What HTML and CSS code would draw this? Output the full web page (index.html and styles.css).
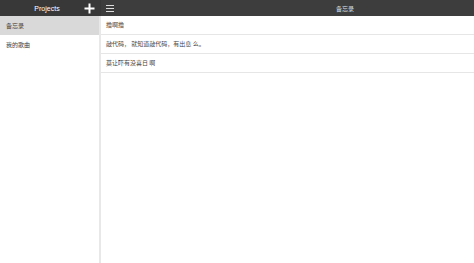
FILE: index.html
```
<!DOCTYPE html>
<html lang="zh">
<head>
    <meta charset="UTF-8">
    <meta name="viewport" content="width=device-width, initial-scale=1.0">
    <title>备忘录</title>
    <link rel="stylesheet" href="styles.css">
</head>
<body>
    <div class="app">
        <div class="sidebar">
            <div class="side-header">
                <span class="side-title">Projects</span>
                <span class="add-btn">
                    <svg width="11" height="11" viewBox="0 0 11 11"><path d="M5.5 0.5v10M0.5 5.5h10" stroke="#fff" stroke-width="2"/></svg>
                </span>
            </div>
            <ul class="project-list">
                <li class="active">备忘录</li>
                <li>我的歌曲</li>
            </ul>
        </div>
        <div class="main">
            <div class="main-header">
                <span class="menu-btn">
                    <svg width="8" height="7" viewBox="0 0 8 7"><path d="M0 0.5h8M0 3.5h8M0 6.5h8" stroke="#ddd" stroke-width="1"/></svg>
                </span>
                <span class="main-title">备忘录</span>
            </div>
            <ul class="note-list">
                <li>撸啊撸</li>
                <li>敲代码，&nbsp;就知道敲代码，有出息 么。</li>
                <li>莫让吓有没喜日 啊</li>
            </ul>
        </div>
    </div>
</body>
</html>
```
FILE: styles.css
```
body {
    margin: 0;
    font-family: "Noto Sans CJK SC", "Noto Sans", sans-serif;
    font-size: 6px;
    color: #444;
    background-color: #fff;
}

.app {
    display: flex;
    height: 263px;
}

.sidebar {
    width: 101px;
    display: flex;
    flex-direction: column;
}

.side-header {
    height: 16px;
    background-color: #383838;
    display: flex;
    align-items: center;
}

.side-title {
    flex: 1;
    text-align: center;
    color: #fff;
    font-family: "Liberation Sans", Arial, sans-serif;
    font-size: 7px;
    padding-left: 10px;
}

.add-btn {
    width: 11px;
    height: 11px;
    margin-right: 6px;
    display: flex;
}

.project-list,
.note-list {
    list-style-type: none;
    margin: 0;
    padding: 0;
}

.project-list {
    flex: 1;
    border-right: 2px solid #e8e8e8;
}

.project-list li {
    height: 19px;
    line-height: 19px;
    padding-left: 6px;
}

.project-list li.active {
    background-color: #d9d9d9;
}

.main {
    flex: 1;
    display: flex;
    flex-direction: column;
}

.main-header {
    height: 16px;
    background-color: #3d3d3d;
    display: flex;
    align-items: center;
    padding-left: 5px;
}

.menu-btn {
    display: flex;
    width: 8px;
}

.main-title {
    color: #ddd;
    margin-left: 222px;
}

.note-list li {
    height: 18px;
    line-height: 18px;
    padding-left: 5px;
    border-bottom: 1px solid #e6e6e6;
}
```
